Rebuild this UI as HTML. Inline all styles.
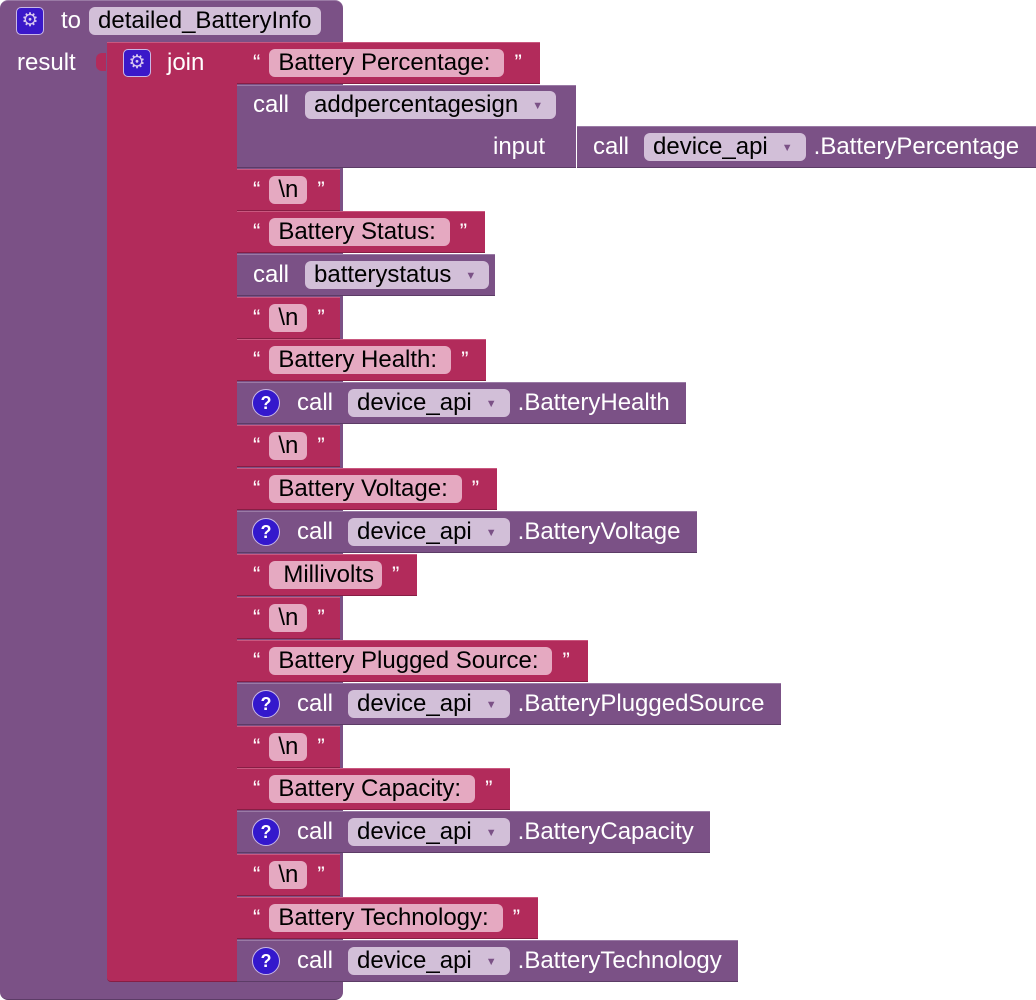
<!DOCTYPE html>
<html><head><style>
body{margin:0;width:1036px;height:1000px;background:#fff;position:relative;overflow:hidden;font-family:"Liberation Sans",Arial,sans-serif;font-size:24px}
.b{position:absolute;box-sizing:border-box;}
.pu{background:#7b5186;border-top:1px solid #9a7aa5;border-bottom:1px solid #5c3c66}
.pk{background:#b22b5b;border-top:1px solid #c9587f;border-bottom:1px solid #871e44}
.r{position:absolute;display:flex;align-items:center;height:42px;color:#fff;white-space:nowrap}
.f{background:#e5a9c1;color:#000;border-radius:6px;height:28px;line-height:28px;padding:0 14px 0 9px;margin:0 10px 0 9px}
.n{padding:0 9px}
.d{background:#d2bfd8;color:#000;border-radius:6px;height:28px;line-height:28px;padding:0 13px 0 9px;margin:0 8px}
.d i{font-style:normal;color:#7b5186;font-size:11px;margin-left:14px;vertical-align:3px}
.q{font-size:22px}
.ic{width:28px;height:28px;border-radius:50%;background:#3418cc;border:1px solid #c9b8e8;box-sizing:border-box;color:#fff;font-weight:bold;font-size:18px;text-align:center;line-height:26px;margin-right:17px}
.gear{width:28px;height:28px;border-radius:5px;background:#3a18c9;border:1px solid #c9b8e8;box-sizing:border-box;color:#d8c8f0;text-align:center;line-height:26px;font-size:19px}
.tab{position:absolute;width:10px;height:18px;border-radius:6px 0 0 6px;}
</style></head><body>
<div class="b pu" style="left:0;top:0;width:343px;height:1000px;border-radius:8px"></div>
<div class="r" style="left:16px;top:0"><span class="gear">⚙</span><span style="margin-left:17px">to</span><span class="d" style="padding-right:9px">detailed_BatteryInfo</span></div>
<div class="r" style="left:17px;top:42px">result</div>
<div class="b pk" style="left:107px;top:42px;width:130px;height:940px;border-radius:0 0 0 4px"></div>
<div class="tab" style="left:96px;top:53px;background:#b22b5b"></div>
<div class="r" style="left:123px;top:42px"><span class="gear">⚙</span><span style="margin-left:16px">join</span></div>

<div class="b pk" style="left:237px;top:42px;width:303px;height:42px"></div>
<div class="r" style="left:253px;top:42px"><span class="q">“</span><span class="f">Battery Percentage:</span><span class="q">”</span></div>
<div class="b pu" style="left:237px;top:85px;width:339px;height:83px"></div>
<div class="r" style="left:253px;top:84px">call<span class="d" style="margin-left:16px">addpercentagesign<i>▼</i></span></div>
<div class="r" style="left:493px;top:126px">input</div>
<div class="b pu" style="left:577px;top:126px;width:459px;height:42px"></div>
<div class="r" style="left:593px;top:126px">call<span class="d" style="margin-left:15px">device_api<i>▼</i></span>.BatteryPercentage</div>

<div class="b pk" style="left:237px;top:169px;width:103px;height:42px"></div>
<div class="r" style="left:253px;top:169px"><span class="q">“</span><span class="f n">\n</span><span class="q">”</span></div>
<div class="b pk" style="left:237px;top:211px;width:248px;height:42px"></div>
<div class="r" style="left:253px;top:211px"><span class="q">“</span><span class="f">Battery Status:</span><span class="q">”</span></div>
<div class="b pu" style="left:237px;top:254px;width:258px;height:42px"></div>
<div class="r" style="left:253px;top:254px">call<span class="d" style="margin-left:16px">batterystatus<i>▼</i></span></div>
<div class="b pk" style="left:237px;top:297px;width:103px;height:42px"></div>
<div class="r" style="left:253px;top:297px"><span class="q">“</span><span class="f n">\n</span><span class="q">”</span></div>
<div class="b pk" style="left:237px;top:339px;width:249px;height:42px"></div>
<div class="r" style="left:253px;top:339px"><span class="q">“</span><span class="f">Battery Health:</span><span class="q">”</span></div>
<div class="b pu" style="left:237px;top:382px;width:449px;height:42px"></div>
<div class="r" style="left:252px;top:382px"><span class="ic">?</span>call<span class="d" style="margin-left:15px">device_api<i>▼</i></span>.BatteryHealth</div>
<div class="b pk" style="left:237px;top:425px;width:103px;height:42px"></div>
<div class="r" style="left:253px;top:425px"><span class="q">“</span><span class="f n">\n</span><span class="q">”</span></div>
<div class="b pk" style="left:237px;top:468px;width:260px;height:42px"></div>
<div class="r" style="left:253px;top:468px"><span class="q">“</span><span class="f">Battery Voltage:</span><span class="q">”</span></div>
<div class="b pu" style="left:237px;top:511px;width:460px;height:42px"></div>
<div class="r" style="left:252px;top:511px"><span class="ic">?</span>call<span class="d" style="margin-left:15px">device_api<i>▼</i></span>.BatteryVoltage</div>
<div class="b pk" style="left:237px;top:554px;width:180px;height:42px"></div>
<div class="r" style="left:253px;top:554px"><span class="q">“</span><span class="f" style="padding:0 8px 0 14px">Millivolts</span><span class="q">”</span></div>
<div class="b pk" style="left:237px;top:597px;width:103px;height:42px"></div>
<div class="r" style="left:253px;top:597px"><span class="q">“</span><span class="f n">\n</span><span class="q">”</span></div>
<div class="b pk" style="left:237px;top:640px;width:351px;height:42px"></div>
<div class="r" style="left:253px;top:640px"><span class="q">“</span><span class="f">Battery Plugged Source:</span><span class="q">”</span></div>
<div class="b pu" style="left:237px;top:683px;width:544px;height:42px"></div>
<div class="r" style="left:252px;top:683px"><span class="ic">?</span>call<span class="d" style="margin-left:15px">device_api<i>▼</i></span>.BatteryPluggedSource</div>
<div class="b pk" style="left:237px;top:726px;width:103px;height:42px"></div>
<div class="r" style="left:253px;top:726px"><span class="q">“</span><span class="f n">\n</span><span class="q">”</span></div>
<div class="b pk" style="left:237px;top:768px;width:273px;height:42px"></div>
<div class="r" style="left:253px;top:768px"><span class="q">“</span><span class="f">Battery Capacity:</span><span class="q">”</span></div>
<div class="b pu" style="left:237px;top:811px;width:473px;height:42px"></div>
<div class="r" style="left:252px;top:811px"><span class="ic">?</span>call<span class="d" style="margin-left:15px">device_api<i>▼</i></span>.BatteryCapacity</div>
<div class="b pk" style="left:237px;top:854px;width:103px;height:42px"></div>
<div class="r" style="left:253px;top:854px"><span class="q">“</span><span class="f n">\n</span><span class="q">”</span></div>
<div class="b pk" style="left:237px;top:897px;width:301px;height:42px"></div>
<div class="r" style="left:253px;top:897px"><span class="q">“</span><span class="f">Battery Technology:</span><span class="q">”</span></div>
<div class="b pu" style="left:237px;top:940px;width:501px;height:42px"></div>
<div class="r" style="left:252px;top:940px"><span class="ic">?</span>call<span class="d" style="margin-left:15px">device_api<i>▼</i></span>.BatteryTechnology</div>
</body></html>
